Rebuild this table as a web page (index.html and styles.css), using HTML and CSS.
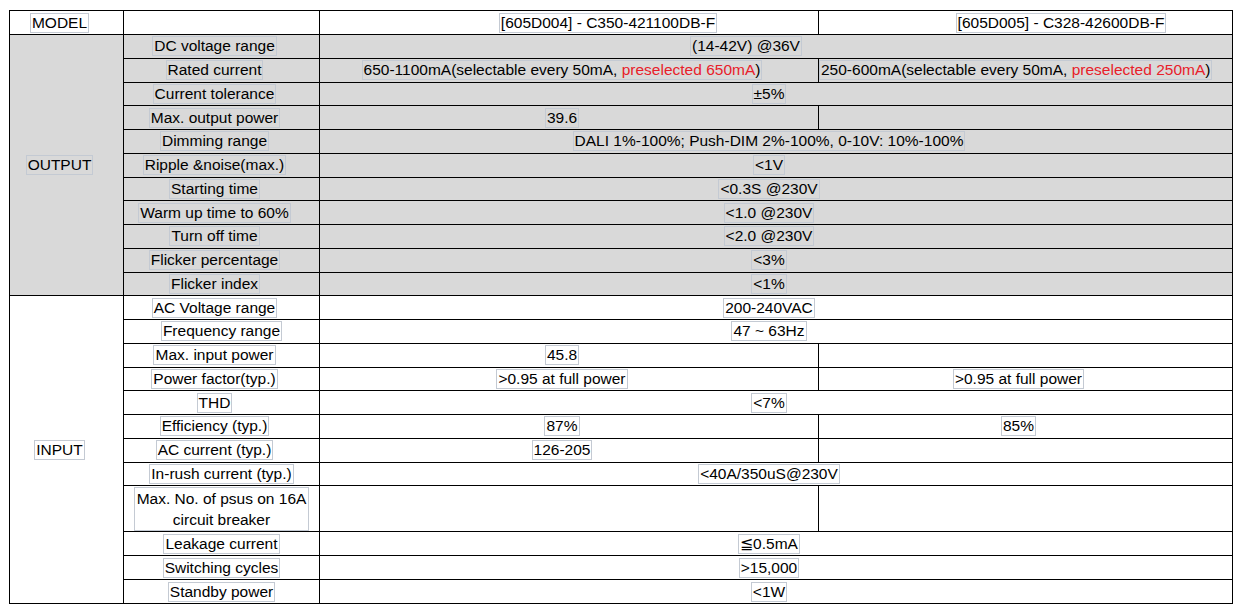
FILE: index.html
```html
<!DOCTYPE html>
<html>
<head>
<meta charset="utf-8">
<link rel="stylesheet" href="styles.css">
</head>
<body>
<table class="spec">
  <colgroup>
    <col class="c-group">
    <col class="c-label">
    <col class="c-val1">
    <col class="c-val2">
  </colgroup>
  <tbody>
    <tr class="row-head">
      <td><span class="t">MODEL</span></td>
      <td></td>
      <td class="model1"><span class="t">[605D004] - C350-421100DB-F</span></td>
      <td class="model2"><span class="t">[605D005] - C328-42600DB-F</span></td>
    </tr>
  </tbody>
  <tbody class="grp-output">
    <tr>
      <td rowspan="11"><span class="t">OUTPUT</span></td>
      <td><span class="t">DC voltage range</span></td>
      <td colspan="2" class="dcv"><span class="t">(14-42V) @36V</span></td>
    </tr>
    <tr>
      <td><span class="t">Rated current</span></td>
      <td><span class="t">650-1100mA(selectable every 50mA, <span class="red">preselected 650mA</span>)</span></td>
      <td class="rc2"><span class="t">250-600mA(selectable every 50mA, <span class="red">preselected 250mA</span>)</span></td>
    </tr>
    <tr>
      <td><span class="t">Current tolerance</span></td>
      <td colspan="2"><span class="t">±5%</span></td>
    </tr>
    <tr>
      <td><span class="t">Max. output power</span></td>
      <td><span class="t">39.6</span></td>
      <td></td>
    </tr>
    <tr>
      <td><span class="t">Dimming range</span></td>
      <td colspan="2"><span class="t">DALI 1%-100%; Push-DIM 2%-100%, 0-10V: 10%-100%</span></td>
    </tr>
    <tr>
      <td><span class="t">Ripple &amp;noise(max.)</span></td>
      <td colspan="2"><span class="t">&lt;1V</span></td>
    </tr>
    <tr>
      <td><span class="t">Starting time</span></td>
      <td colspan="2"><span class="t">&lt;0.3S @230V</span></td>
    </tr>
    <tr>
      <td><span class="t">Warm up time to 60%</span></td>
      <td colspan="2"><span class="t">&lt;1.0 @230V</span></td>
    </tr>
    <tr>
      <td><span class="t">Turn off time</span></td>
      <td colspan="2"><span class="t">&lt;2.0 @230V</span></td>
    </tr>
    <tr>
      <td><span class="t">Flicker percentage</span></td>
      <td colspan="2"><span class="t">&lt;3%</span></td>
    </tr>
    <tr>
      <td><span class="t">Flicker index</span></td>
      <td colspan="2"><span class="t">&lt;1%</span></td>
    </tr>
  </tbody>
  <tbody class="grp-input">
    <tr>
      <td rowspan="12"><span class="t">INPUT</span></td>
      <td><span class="t">AC Voltage range</span></td>
      <td colspan="2"><span class="t">200-240VAC</span></td>
    </tr>
    <tr>
      <td class="nopad"><span class="t">Frequency range</span></td>
      <td colspan="2"><span class="t">47 ~ 63Hz</span></td>
    </tr>
    <tr>
      <td><span class="t">Max. input power</span></td>
      <td><span class="t">45.8</span></td>
      <td></td>
    </tr>
    <tr>
      <td><span class="t">Power factor(typ.)</span></td>
      <td><span class="t">&gt;0.95 at full power</span></td>
      <td><span class="t">&gt;0.95 at full power</span></td>
    </tr>
    <tr>
      <td><span class="t">THD</span></td>
      <td colspan="2"><span class="t">&lt;7%</span></td>
    </tr>
    <tr>
      <td><span class="t">Efficiency (typ.)</span></td>
      <td><span class="t">87%</span></td>
      <td><span class="t">85%</span></td>
    </tr>
    <tr>
      <td><span class="t">AC current (typ.)</span></td>
      <td><span class="t">126-205</span></td>
      <td></td>
    </tr>
    <tr>
      <td class="nopad"><span class="t">In-rush current (typ.)</span></td>
      <td colspan="2"><span class="t">&lt;40A/350uS@230V</span></td>
    </tr>
    <tr class="row-tall">
      <td class="nopad"><span class="t two">Max. No. of psus on 16A<br>circuit breaker</span></td>
      <td></td>
      <td></td>
    </tr>
    <tr class="row-end">
      <td class="nopad"><span class="t">Leakage current</span></td>
      <td colspan="2"><span class="t">≦0.5mA</span></td>
    </tr>
    <tr class="row-end">
      <td class="nopad"><span class="t">Switching cycles</span></td>
      <td colspan="2"><span class="t">&gt;15,000</span></td>
    </tr>
    <tr class="row-end">
      <td class="nopad"><span class="t">Standby power</span></td>
      <td colspan="2"><span class="t">&lt;1W</span></td>
    </tr>
  </tbody>
</table>
</body>
</html>
```

FILE: styles.css
```css
html, body {
  background: #ffffff;
}

body {
  margin: 0;
  padding: 10px 0 0 9px;
  font-family: "Liberation Sans", Arial, sans-serif;
  font-size: 15.5px;
  color: #000000;
}

.spec {
  border-collapse: collapse;
  table-layout: fixed;
  width: 1223px;
}

.c-group { width: 114px; }
.c-label { width: 196px; }
.c-val1 { width: 499px; }
.c-val2 { width: 414px; }

.spec td {
  border: 1px solid #000;
  text-align: center;
  vertical-align: middle;
  padding: 0 14px 0 0;
  height: 22.75px;
  white-space: nowrap;
  overflow: visible;
}

.row-head td {
  height: 23px;
  background: #ffffff;
}

.grp-output td {
  background: #d9d9d9;
}

.grp-input td {
  background: #ffffff;
}

.row-tall td {
  height: 45px;
}

.row-end td {
  height: 23px;
}

.t {
  display: inline-block;
  border: 1px solid #c4cad3;
  padding: 0 1px;
  line-height: 18px;
  vertical-align: middle;
}

.t.two {
  line-height: 21px;
  padding: 0 2px;
}

.red {
  color: #e8202a;
}

.spec td.model1 {
  padding: 0 0 0 78px;
}

.spec td.model2 {
  padding: 0 0 0 71px;
}

.spec td.dcv {
  padding: 0 60px 0 0;
}

.spec td.rc2 {
  padding: 0 22px 0 0;
}

.spec td.nopad {
  padding: 0;
}
```
